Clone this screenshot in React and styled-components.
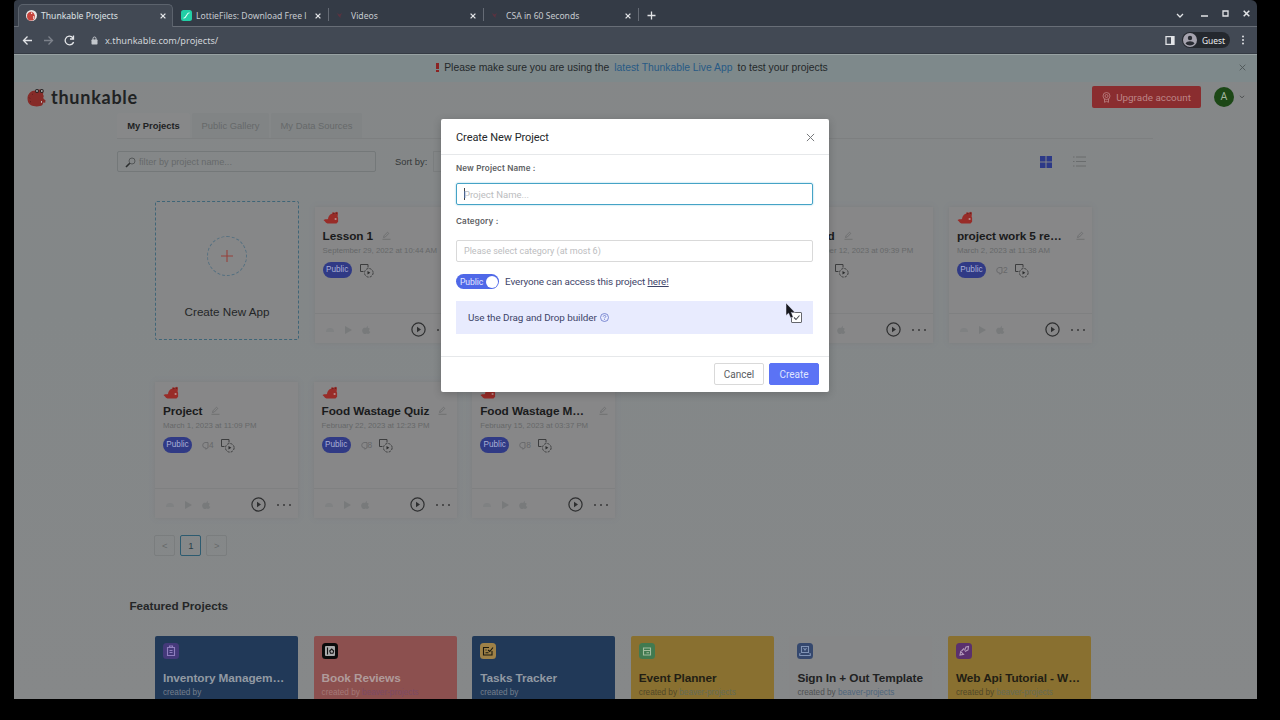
import React from 'react'
import styled, { createGlobalStyle } from 'styled-components'

const SANS = '"Liberation Sans", Arial, sans-serif'
const NOTO = '"Noto Sans", sans-serif'
const ROBOTO = 'Roboto, sans-serif'

const GlobalStyle = createGlobalStyle`
  * {
    box-sizing: border-box;
  }

  body {
    margin: 0;
    background: #000;
    overflow: hidden;
  }

  svg {
    display: block;
    flex: none;
  }
`

const Screen = styled.div`
  height: 720px;
  padding: 0 23px 21px 14px;
  background: #000;
`

const Window = styled.div`
  height: 699px;
  display: flex;
  flex-direction: column;
  overflow: hidden;
  border-radius: 4px 6px 0 0;
  background: #343b46;
  font-family: ${SANS};
  white-space: nowrap;
`

/* browser chrome */

const TabStrip = styled.div`
  height: 27px;
  flex: none;
  display: flex;
  align-items: flex-end;
  padding-left: 4px;
  border-bottom: 1px solid #686e77;
  font: 8.6px ${NOTO};
  color: #d3d6da;
`

const Tab = styled.div`
  width: 155px;
  height: ${props => (props.$active ? 23 : 22)}px;
  display: flex;
  align-items: center;
  padding: ${props => (props.$active ? '0 6px 1px 7px' : '0 6px 0 7px')};
  margin-bottom: ${props => (props.$active ? '-1px' : 0)};
  border: 1px solid ${props => (props.$active ? '#5c636d' : 'transparent')};
  border-bottom: 0;
  border-radius: 5px 5px 0 0;
  background: ${props => (props.$active ? '#424954' : 'transparent')};
`

const TabTitle = styled.span`
  width: 112px;
  margin-left: 4px;
  margin-right: auto;
  color: ${props => (props.$active ? '#dfe2e5' : '#c6cacf')};
`

const TabDivider = styled.i`
  width: 1px;
  height: 13px;
  margin: 0 -1px 5px 0;
  background: #656b75;
`

const NewTab = styled.div`
  height: 22px;
  display: flex;
  align-items: center;
  padding-left: 9px;
`

const WindowControls = styled.div`
  height: 26px;
  display: flex;
  align-items: center;
  gap: 14px;
  margin-left: auto;
  padding-right: 7px;

  svg:first-child {
    margin: 4px 3px 0 0;
  }
`

const Toolbar = styled.div`
  height: 27px;
  flex: none;
  display: flex;
  align-items: center;
  padding: 0 9px 0 8px;
  background: #424954;
  border-bottom: 1px solid #353b44;
  font: 9.2px ${NOTO};
  color: #d0d4d8;
`

const NavIcons = styled.div`
  display: flex;
  gap: 10px;
  margin-right: 16px;
`

const Url = styled.span`
  margin-left: 7px;
  margin-right: auto;
`

const Guest = styled.div`
  height: 16px;
  width: 48px;
  display: flex;
  align-items: center;
  gap: 5px;
  margin: 0 8px 0 7px;
  padding-left: 1px;
  border-radius: 8px;
  background: #24282e;
  font-size: 8.4px;
  color: #eceef0;
`

/* page */

const Page = styled.div`
  position: relative;
  flex: 1;
  overflow: hidden;
  background: linear-gradient(#858788, #838788 40%, #868889);
`

const Banner = styled.div`
  height: 28px;
  flex: none;
  display: flex;
  align-items: center;
  padding: 0 11px 3px 11px;
  border-top: 1px solid #98a2a3;
  background: #7e898b;
  font-size: 10.35px;
  color: #24282a;
`

const Bang = styled.i`
  width: 3px;
  height: 9px;
  margin-right: 5px;
  background: linear-gradient(#8b2323 70%, transparent 70% 82%, #8b2323 82%);
`

const BannerLink = styled.a`
  margin: 0 5px;
  color: #285a85;
`

const BannerText = styled.div`
  display: flex;
  align-items: center;
  margin: 0 auto;
`

const Header = styled.header`
  height: 31px;
  display: flex;
  align-items: center;
  padding: 0 12px 1px 13px;
`

const Wordmark = styled.span`
  margin: 0 auto 0 5px;
  font: 700 18px Lato, sans-serif;
  letter-spacing: 0.75px;
  color: #202223;
`

const Upgrade = styled.button`
  width: 109px;
  height: 22px;
  display: flex;
  align-items: center;
  justify-content: center;
  gap: 5px;
  padding: 0;
  border: 0;
  border-radius: 2px;
  background: #8a2d2f;
  font: 9.9px ${ROBOTO};
  color: #bd8587;
`

const Avatar = styled.div`
  width: 20px;
  height: 20px;
  margin: 0 5px 0 13px;
  border-radius: 50%;
  background: #1c4716;
  font: 10.5px/20px ${ROBOTO};
  text-align: center;
  color: #a3b5a0;
`

const Tabs = styled.nav`
  width: 1036px;
  height: 26px;
  display: flex;
  gap: 2px;
  margin-left: 103px;
  border-bottom: 1px solid #7d7f80;
  font-size: 9.4px;
`

const PageTab = styled.div`
  width: ${props => props.$width}px;
  line-height: 25px;
  text-align: center;
  font-weight: ${props => (props.$active ? 700 : 400)};
  color: ${props => (props.$active ? '#202223' : '#66696a')};
  background: ${props => (props.$active ? '#878889' : '#818485')};
  border-radius: 2px 2px 0 0;
`

const Filters = styled.div`
  height: 21px;
  display: flex;
  align-items: center;
  margin: 12px 0 29px;
  padding: 0 171px 0 103px;
  font-size: 9.4px;
  color: #343738;
`

const Search = styled.div`
  width: 259px;
  height: 21px;
  display: flex;
  align-items: center;
  gap: 3px;
  margin-right: 19px;
  padding: 1px 0 0 7px;
  border: 1px solid #747879;
  border-radius: 2px;
  font-size: 9.2px;
  color: #66696a;
`

const SortSelect = styled.div`
  width: 90px;
  height: 21px;
  margin-left: 6px;
  margin-right: auto;
  border: 1px solid #7b7e7f;
`

const ViewIcons = styled.div`
  display: flex;
  align-items: center;
  gap: 21px;
`

const Grid = styled.div`
  display: grid;
  grid-template-columns: repeat(6, 143px);
  column-gap: 15.6px;
  margin-left: 141px;
  height: ${props => props.$height}px;
  align-items: start;
`

const NewApp = styled.div`
  width: 144px;
  height: 139px;
  display: flex;
  flex-direction: column;
  align-items: center;
  padding-top: 34px;
  border: 1px dashed #3f6577;
  border-radius: 2px;
  background: #868788;
  font-size: 11.65px;
  color: #242627;
`

const PlusCircle = styled.div`
  width: 40px;
  height: 40px;
  display: flex;
  align-items: center;
  justify-content: center;
  margin-bottom: 29px;
  border: 1px dashed #557080;
  border-radius: 50%;
`

const Card = styled.article`
  width: 143px;
  height: 136px;
  display: flex;
  flex-direction: column;
  margin: ${props => (props.$offset ? '6px 0 0 1px' : 0)};
  padding: 4px 5px 0 8px;
  background: #878788;
  box-shadow: 0 0 4px #7d7e80;
`

const TitleRow = styled.div`
  height: 17px;
  display: flex;
  align-items: center;
  gap: 9px;
  margin: 3px 0 1px;
`

const Title = styled.h3`
  min-width: ${props => (props.$clipped ? '110px' : 0)};
  margin: 0;
  font-size: 11.8px;
  letter-spacing: -0.08px;
  color: #1a1b1c;
`

const DateText = styled.div`
  height: 13px;
  font-size: 7.8px;
  line-height: 12px;
  color: #666768;
`

const Badges = styled.div`
  height: 16px;
  display: flex;
  align-items: center;
  margin-top: 4px;
`

const Pill = styled.span`
  width: 29px;
  height: 16px;
  margin-right: 7px;
  border-radius: 8px;
  background: #303a85;
  font-size: 8.2px;
  line-height: 15px;
  text-align: center;
  color: #a9afd6;
`

const Blocks = styled.span`
  display: flex;
  align-items: center;
  gap: 0;
  margin: 0 6px 0 3px;
  font-size: 8.4px;
  color: #66686a;
`

const CardFooter = styled.footer`
  height: 30px;
  display: flex;
  align-items: center;
  margin: auto -5px 0 -8px;
  padding: 2px 7px 0 8px;
  border-top: 1px solid #7f8081;
`

const Stores = styled.div`
  display: flex;
  gap: 8px;
  margin-right: auto;
  padding-left: 2px;
`

const Dots = styled.div`
  width: 14px;
  display: flex;
  justify-content: space-between;
  margin-left: 11px;

  i {
    width: 2px;
    height: 2px;
    border-radius: 50%;
    background: #38393a;
  }
`

const Pagination = styled.div`
  display: flex;
  gap: 5px;
  margin: 17px 0 42px 140.4px;
`

const PageButton = styled.div`
  width: 21px;
  height: 21px;
  border: 1px solid ${props => (props.$current ? '#2d5b70' : '#7a7d7e')};
  border-radius: 2px;
  font-size: 9.5px;
  line-height: 19px;
  text-align: center;
  color: ${props => (props.$current ? '#293e49' : '#66696a')};
`

const Heading = styled.h2`
  height: 16px;
  margin: 0 0 22px 115.4px;
  font-size: 11.7px;
  line-height: 16px;
  color: #242627;
`

const Featured = styled.article`
  width: 143px;
  height: 140px;
  padding: 7px 8px;
  border-radius: 2px;
  background: ${props => props.$bg};
  color: ${props => props.$fg};
`

const FeaturedTitle = styled(Title)`
  margin: 12px 0 2px;
  color: inherit;
`

const Credit = styled.div`
  font-size: 8.2px;
  line-height: 11px;
  color: ${props => props.$color};

  span {
    color: ${props => props.$link};
  }
`

/* dialog */

const Overlay = styled.div`
  position: absolute;
  inset: 0;
  padding: 65px 0 0 427px;
`

const Modal = styled.div`
  width: 388px;
  height: 273px;
  display: flex;
  flex-direction: column;
  border-radius: 2px;
  background: #fff;
  box-shadow: 0 2px 8px rgba(0, 0, 0, 0.2);
  font: 9.9px ${ROBOTO};
  letter-spacing: -0.07px;
  color: #3d4468;
`

const ModalHeader = styled.div`
  height: 36px;
  display: flex;
  align-items: center;
  justify-content: space-between;
  padding: 1px 14px 0 15px;
  border-bottom: 1px solid #e6e8ea;
  font-size: 11px;
  color: #25282b;
`

const ModalBody = styled.div`
  flex: 1;
  padding: 6px 16px 0 15px;
`

const Label = styled.div`
  height: 15px;
  font: 600 8.1px/15px Inter, sans-serif;
  letter-spacing: 0.15px;
  color: #5c5e62;
`

const Field = styled.div`
  height: 22px;
  display: flex;
  align-items: center;
  margin: ${props => props.$margin};
  padding-left: 7px;
  border: 1px solid ${props => (props.$focus ? '#45a3c6' : '#d9d9d9')};
  border-radius: 2px;
  box-shadow: ${props => (props.$focus ? '0 0 2px #8fcbe1' : 'none')};
  font-size: ${props => (props.$focus ? 9.5 : 9)}px;
  letter-spacing: 0;
  color: #bcbdc0;
`

const Caret = styled.i`
  width: 1px;
  height: 12px;
  margin-right: -1px;
  background: #444;
`

const AccessRow = styled.div`
  height: 15px;
  display: flex;
  align-items: center;
  gap: 6px;
`

const AccessText = styled.span`
  margin-top: -1px;
  letter-spacing: -0.1px;
`

const Toggle = styled.div`
  width: 43px;
  height: 15px;
  display: flex;
  align-items: center;
  justify-content: space-between;
  padding: 0 1px 0 4px;
  border-radius: 8px;
  background: #4f68e8;
  font-size: 8.6px;
  color: #e3e7ff;

  i {
    width: 12px;
    height: 12px;
    border-radius: 50%;
    background: #fff;
  }
`

const Builder = styled.div`
  height: 33px;
  display: flex;
  align-items: center;
  gap: 3px;
  margin-top: 12px;
  padding: 0 11px 0 12px;
  background: #e8ebfe;
`

const Checkbox = styled.div`
  position: relative;
  width: 11px;
  height: 11px;
  margin-left: auto;
  border: 1px solid #65676d;
  border-radius: 1px;
  background: #fff;
`

const Pointer = styled.svg`
  position: absolute;
  left: -7px;
  top: -10px;
`

const ModalFooter = styled.div`
  height: 36px;
  display: flex;
  justify-content: flex-end;
  gap: 5px;
  padding: 6px 10px 0 0;
  border-top: 1px solid #e6e8ea;
`

const Button = styled.button`
  width: 50px;
  height: 22px;
  padding: 0;
  border: 1px solid ${props => (props.$primary ? '#5b73f5' : '#d9d9d9')};
  border-radius: 2px;
  background: ${props => (props.$primary ? '#5b73f5' : '#fff')};
  font: 10px ${ROBOTO};
  color: ${props => (props.$primary ? '#dfe4ff' : '#5a5d61')};
`

/* icons */

const Cross = ({ size = 6, color = '#e2e4e7', width = 1.3 }) => (
  <svg width={size} height={size} viewBox="0 0 10 10" stroke={color} strokeWidth={(width * 10) / size}>
    <path d="M1 1l8 8M9 1l-8 8" />
  </svg>
)

const Stroke = ({ w, h = w, d, color, width = 1.3 }) => (
  <svg width={w} height={h} viewBox={`0 0 ${w} ${h}`} fill="none" stroke={color} strokeWidth={width}>
    <path d={d} />
  </svg>
)

const BeaverFavicon = () => (
  <svg width="11" height="11" viewBox="0 0 11 11">
    <circle cx="5.5" cy="5.5" r="5.5" fill="#ece9e8" />
    <path d="M1.2 4.5c1-3 5-4 6.800-1l1 2.500-.5 3-2 1.500H3C1.200 9 .7 7 1.200 4.500z" fill="#c6443d" />
    <path d="M5 2.500h1.200v1.500H5zM7.200 6h1v3h-1z" fill="#f5dedb" />
  </svg>
)

const LottieIcon = () => (
  <svg width="11" height="11" viewBox="0 0 11 11">
    <rect width="11" height="11" rx="2.5" fill="#22cfa6" />
    <path d="M2.5 8.3C6 8.3 5 2.8 8.5 2.8" fill="none" stroke="#dcfff6" strokeWidth="1.1" />
  </svg>
)

const DimIcon = () => (
  <svg width="11" height="11" viewBox="0 0 11 11">
    <path d="M1 3l2.500 1.500L6 3 4.500 6v2L2.500 6z" fill="#5b3340" />
  </svg>
)

const Logo = () => (
  <svg width="19" height="19" viewBox="0 0 19 19">
    <path
      d="M.5 10.500C.5 6 4 2.500 8.500 2.500c2.500-1.500 6-1.500 8 0L16 6.500l.8 1.500-.6 2 .8 1.300 1.500 1-.3 2.500-2-.3-.8 2.500C12.500 19 7 18.700 4 17.300 1.500 15.800.5 13.500.5 10.500z"
      fill="#862b28"
    />
    <circle cx="10" cy="3" r="1.9" fill="#222122" />
    <circle cx="14.8" cy="3" r="1.9" fill="#222122" />
    <circle cx="10" cy="3" r=".9" fill="#b0b0b0" />
    <circle cx="14.8" cy="3" r=".9" fill="#b0b0b0" />
    <path d="M14.500 13v1.800" stroke="#c5bcbc" />
    <path d="M2 9.500l1 1M3 13.500l1 .5M5 6l.8.5" stroke="#5a1d1d" />
  </svg>
)

const Beaver = () => (
  <svg width="16" height="13" viewBox="0 0 16 13">
    <path
      d="M.5 9C2 7.600 3.500 8.500 5 8 5.300 5 7 3.300 9 2.800L9.800 1l1.500.8L14 .8l1 1.200-.4 3.500.5 1.500v3.800L13.500 12.600H6C4 12.600 2.500 11.500 2 10.500z"
      fill="#982c28"
    />
    <path d="M10.300 3.200l.8-1M13.300 2.700l.5-1" stroke="#46201f" />
    <circle cx="12.600" cy="8" r="1.100" fill="#b98b89" />
  </svg>
)

const Pencil = () => (
  <svg width="9" height="9" viewBox="0 0 9 9" fill="none" stroke="#696b6c" strokeWidth=".8">
    <path d="M1.500 6.500L2 4.800 5.500 1.200l1.300 1.200-3.500 3.600zM.5 8.300h8" />
  </svg>
)

const CopyPlay = () => (
  <svg width="15" height="15" viewBox="0 0 15 15" fill="none" stroke="#3c3d3e">
    <path d="M4.500 8.500h-3v-7h7.500v3" />
    <circle cx="9.800" cy="9.800" r="4.300" strokeDasharray="2.200 1.200" />
    <path d="M8.500 8l2.800 1.800-2.800 1.800z" fill="#2b2c2d" stroke="none" />
  </svg>
)

const Play = () => (
  <svg width="15" height="15" viewBox="0 0 15 15">
    <circle cx="7.5" cy="7.5" r="6.6" fill="none" stroke="#2e2f30" strokeWidth="1.2" />
    <path d="M6 4.800l4 2.700-4 2.700z" fill="#2e2f30" />
  </svg>
)

const StoreIcons = () => (
  <Stores>
    <svg width="10" height="10" viewBox="0 0 10 10" fill="#7f8182">
      <path d="M1 7a4 4 0 018 0z" />
    </svg>
    <svg width="10" height="10" viewBox="0 0 10 10" fill="#787a7b">
      <path d="M2 1l7 4-7 4z" />
    </svg>
    <svg width="10" height="10" viewBox="0 0 10 10" fill="#787a7b">
      <path d="M5 3L7 .8 6.800 3C9 2.600 9 4 8 5c0 1 .5 1.500 1.200 2C8 9.500 7 9 5.500 8.500 3 10 1 8 1.200 5 2 2.500 4 2.500 5 3z" />
    </svg>
  </Stores>
)

const BlockCount = ({ count }) => (
  <Blocks>
    <svg width="7" height="9" viewBox="0 0 7 9" fill="none" stroke="#66686a" strokeWidth=".9">
      <path d="M6 1.500H3A2.800 2.800 0 003 7h1v1.300L5.200 7H6z" />
    </svg>
    {count}
  </Blocks>
)

const featuredGlyphs = {
  clipboard: 'M4.500 4.500h7v8h-7zM6.500 4.500v-1.500h3v1.500M6.500 7.500h3M6.500 9.500h3',
  book: 'M5.500 4.500v7M7.700 8l2-2 2 2-.7 2.300H8.500z',
  tasks: 'M12 8v4H3.500V4.500H9M5.500 7h1M5.500 9.800h3M8 7l1.800 1.500L13 4.500',
  calendar: 'M11.500 5h-7v7h7zM4.500 7.500h7M7.500 9.800h2.500',
  badge: 'M4.500 3.500h7v6h-7zM2.500 12.500h11M3 10l-.5 2.500M13 10l.5 2.500M6.500 5l1.500 2 1.500-2',
  plug: 'M4 12l.7-3.500 2.800 2.800zM5.500 8L8 5.500M8.500 7.500L10 4l2.500-.5L12 7l-3 1.500',
}

const FeaturedIcon = ({ glyph, bg, color }) => (
  <svg width="16" height="16" viewBox="0 0 16 16">
    <rect width="16" height="16" rx="3.5" fill={bg} />
    {glyph === 'book' && <rect x="3" y="3" width="10" height="10" rx="1" fill="#a9aaab" />}
    <path d={featuredGlyphs[glyph]} fill="none" stroke={color} strokeWidth="1.1" />
  </svg>
)

const browserTabs = [
  { title: 'Thunkable Projects', icon: <BeaverFavicon />, active: true },
  { title: 'LottieFiles: Download Free l', icon: <LottieIcon /> },
  { title: 'Videos', icon: <DimIcon /> },
  { title: 'CSA in 60 Seconds', icon: <DimIcon /> },
]

const recentProjects = [
  { title: 'Lesson 1', date: 'September 29, 2022 at 10:44 AM' },
  null,
  null,
  { title: 'Sound', date: 'September 12, 2023 at 09:39 PM' },
  { title: 'project work 5 re…', date: 'March 2, 2023 at 11:38 AM', blocks: 2 },
]

const olderProjects = [
  { title: 'Project', date: 'March 1, 2023 at 11:09 PM', blocks: 4 },
  { title: 'Food Wastage Quiz', date: 'February 22, 2023 at 12:23 PM', blocks: 8 },
  { title: 'Food Wastage M…', date: 'February 15, 2023 at 03:37 PM', blocks: 8 },
]

const navy = { bg: '#213958', fg: '#9299a3', credit: '#747f8d' }
const gold = { bg: '#897030', fg: '#221e14', credit: '#504727', link: '#646b57' }

const featuredProjects = [
  { ...navy, title: 'Inventory Managem…', glyph: 'clipboard', iconBg: '#44397a', iconColor: '#8f7fbe' },
  {
    title: 'Book Reviews',
    bg: '#8c504f',
    fg: '#b09b9b',
    credit: '#a47978',
    link: '#7b4a64',
    glyph: 'book',
    iconBg: '#0b0b0b',
    iconColor: '#111',
  },
  { ...navy, title: 'Tasks Tracker', glyph: 'tasks', iconBg: '#9e8147', iconColor: '#19180f' },
  { ...gold, title: 'Event Planner', glyph: 'calendar', iconBg: '#417a50', iconColor: '#a2bc9d' },
  {
    title: 'Sign In + Out Template',
    bg: '#868788',
    fg: '#202122',
    credit: '#4d4f51',
    link: '#4e657b',
    glyph: 'badge',
    iconBg: '#35486e',
    iconColor: '#8093b5',
  },
  { ...gold, title: 'Web Api Tutorial - W…', glyph: 'plug', iconBg: '#5a306d', iconColor: '#b39aba' },
]

const ProjectCard = ({ title, date, blocks, offset }) => (
  <Card $offset={offset}>
    <Beaver />
    <TitleRow>
      <Title $clipped={title.endsWith('…')}>{title}</Title>
      <Pencil />
    </TitleRow>
    <DateText>{date}</DateText>
    <Badges>
      <Pill>Public</Pill>
      {blocks && <BlockCount count={blocks} />}
      <CopyPlay />
    </Badges>
    <CardFooter>
      <StoreIcons />
      <Play />
      <Dots>
        <i />
        <i />
        <i />
      </Dots>
    </CardFooter>
  </Card>
)

const BrowserChrome = () => (
  <>
    <TabStrip>
      {browserTabs.map(({ title, icon, active }, i) => (
        <React.Fragment key={title}>
          <Tab $active={active}>
            {icon}
            <TabTitle $active={active}>{title}</TabTitle>
            <Cross />
          </Tab>
          {i > 0 && <TabDivider />}
        </React.Fragment>
      ))}
      <NewTab>
        <Stroke w={9} d="M4.500 .5v8M.5 4.500h8" color="#e2e4e7" />
      </NewTab>
      <WindowControls>
        <Stroke w={8} h={5} d="M1 1l3 3 3-3" color="#e2e4e7" />
        <Stroke w={7} d="M0 6h7" color="#e2e4e7" />
        <Stroke w={7} d="M1 1h5v5H1z" color="#e2e4e7" />
        <Cross size={7} width={1.5} />
      </WindowControls>
    </TabStrip>
    <Toolbar>
      <NavIcons>
        <Stroke w={11} d="M10 5.500H1.500M5.500 1.500l-4 4 4 4" color="#e2e4e7" />
        <Stroke w={11} d="M1 5.500h8.500M5.500 1.500l4 4-4 4" color="#7d828b" />
        <Stroke w={11} d="M9 3A4.300 4.300 0 105.500 9.800 4.300 4.300 0 009.600 7M9.500.5V4H6" color="#e2e4e7" />
      </NavIcons>
      <svg width="7" height="9" viewBox="0 0 7 9">
        <rect x=".5" y="3.5" width="6" height="5" rx=".7" fill="#c3c7cc" />
        <path d="M2 4V2.500a1.500 1.500 0 013 0V4" fill="none" stroke="#c3c7cc" />
      </svg>
      <Url>x.thunkable.com/projects/</Url>
      <svg width="10" height="9" viewBox="0 0 10 9">
        <path d="M1 .7h8v7.600H1z" fill="none" stroke="#e2e4e7" strokeWidth="1.3" />
        <path d="M6 1h3v7H6z" fill="#e2e4e7" />
      </svg>
      <Guest>
        <svg width="14" height="14" viewBox="0 0 14 14">
          <circle cx="7" cy="7" r="7" fill="#a5a3ae" />
          <circle cx="7" cy="5" r="2.2" fill="#292c33" />
          <path d="M2.500 10.500c1.500-3 7.500-3 9 0-2 2.600-7 2.600-9 0z" fill="#292c33" />
        </svg>
        Guest
      </Guest>
      <svg width="10" height="10" viewBox="0 0 10 10" fill="#dfe1e4">
        <circle cx="5" cy="1.5" r="1" />
        <circle cx="5" cy="5" r="1" />
        <circle cx="5" cy="8.5" r="1" />
      </svg>
    </Toolbar>
  </>
)

const CreateProjectModal = () => (
  <Overlay>
    <Modal>
      <ModalHeader>
        Create New Project
        <Cross size={9} color="#77797c" width={1} />
      </ModalHeader>
      <ModalBody>
        <Label>New Project Name :</Label>
        <Field $focus $margin="7px 0 9px">
          <Caret />
          Project Name...
        </Field>
        <Label>Category :</Label>
        <Field $margin="11px 0 12px">Please select category (at most 6)</Field>
        <AccessRow>
          <Toggle>
            Public
            <i />
          </Toggle>
          <AccessText>
            Everyone can access this project <u>here!</u>
          </AccessText>
        </AccessRow>
        <Builder>
          Use the Drag and Drop builder
          <svg width="9" height="9" viewBox="0 0 9 9" fill="none" stroke="#6272c8" strokeWidth=".8">
            <circle cx="4.5" cy="4.5" r="4" />
            <path d="M3.200 3.700c0-1.700 2.600-1.700 2.600-.2 0 .9-1.300.9-1.300 1.900M4.500 6.200v.8" />
          </svg>
          <Checkbox>
            <Stroke w={9} d="M2 4.500l2 2 3.500-4" color="#4b4e55" width={1.1} />
            <Pointer width="12" height="17" viewBox="0 0 12 17">
              <path d="M1 0v12.500l2.600-2.300 2 4.800 2.600-1.100-2-4.500H10z" fill="#16171d" stroke="#e8ebfe" strokeWidth=".5" />
            </Pointer>
          </Checkbox>
        </Builder>
      </ModalBody>
      <ModalFooter>
        <Button>Cancel</Button>
        <Button $primary>Create</Button>
      </ModalFooter>
    </Modal>
  </Overlay>
)

const App = () => (
  <Screen>
    <GlobalStyle />
    <Window>
      <BrowserChrome />
      <Page>
        <Banner>
          <BannerText>
            <Bang />
            Please make sure you are using the
            <BannerLink>latest Thunkable Live App</BannerLink>
            to test your projects
          </BannerText>
          <Cross size={7} color="#4e5657" width={0.9} />
        </Banner>
        <Header>
          <Logo />
          <Wordmark>thunkable</Wordmark>
          <Upgrade>
            <svg width="9" height="11" viewBox="0 0 9 11" fill="none" stroke="#bd8587" strokeWidth=".8">
              <circle cx="4.5" cy="4" r="3.5" />
              <circle cx="4.5" cy="4" r="1.5" />
              <path d="M2.500 7v3.300l2-1 2 1V7" />
            </svg>
            Upgrade account
          </Upgrade>
          <Avatar>A</Avatar>
          <Stroke w={6} h={4} d="M.8 .8l2.200 2 2.200-2" color="#4b4d4e" width={0.9} />
        </Header>
        <Tabs>
          <PageTab $active $width={73}>
            My Projects
          </PageTab>
          <PageTab $width={77}>Public Gallery</PageTab>
          <PageTab $width={91}>My Data Sources</PageTab>
        </Tabs>
        <Filters>
          <Search>
            <svg width="11" height="11" viewBox="0 0 11 11" fill="none">
              <circle cx="7" cy="4" r="3" stroke="#535657" />
              <path d="M4.800 6.200L1 10" stroke="#2b2d2e" strokeWidth="1.6" />
            </svg>
            filter by project name...
          </Search>
          Sort by:
          <SortSelect />
          <ViewIcons>
            <svg width="12" height="12" viewBox="0 0 12 12" fill="#2c3987">
              <path d="M0 0h5.500v5.500H0zM6.500 0H12v5.500H6.500zM0 6.500h5.500V12H0zM6.500 6.500H12V12H6.500z" />
            </svg>
            <Stroke w={13} h={11} d="M3 1h10M3 5.500h10M3 10h10M0 1h1.500M0 5.500h1.500M0 10h1.500" color="#66696a" width={0.9} />
          </ViewIcons>
        </Filters>
        <Grid $height={181}>
          <NewApp>
            <PlusCircle>
              <Stroke w={12} d="M6 0v12M0 6h12" color="#96413b" width={1.1} />
            </PlusCircle>
            Create New App
          </NewApp>
          {recentProjects.map((project, i) =>
            project ? <ProjectCard key={i} offset {...project} /> : <Card key={i} $offset />
          )}
        </Grid>
        <Grid $height={136}>
          {olderProjects.map(project => (
            <ProjectCard key={project.title} {...project} />
          ))}
        </Grid>
        <Pagination>
          <PageButton>&lt;</PageButton>
          <PageButton $current>1</PageButton>
          <PageButton>&gt;</PageButton>
        </Pagination>
        <Heading>Featured Projects</Heading>
        <Grid $height={140}>
          {featuredProjects.map(({ title, bg, fg, credit, link, glyph, iconBg, iconColor }) => (
            <Featured key={title} $bg={bg} $fg={fg}>
              <FeaturedIcon glyph={glyph} bg={iconBg} color={iconColor} />
              <FeaturedTitle>{title}</FeaturedTitle>
              <Credit $color={credit} $link={link}>
                created by {link && <span>beaver-projects</span>}
              </Credit>
            </Featured>
          ))}
        </Grid>
        <CreateProjectModal />
      </Page>
    </Window>
  </Screen>
)

export default App
